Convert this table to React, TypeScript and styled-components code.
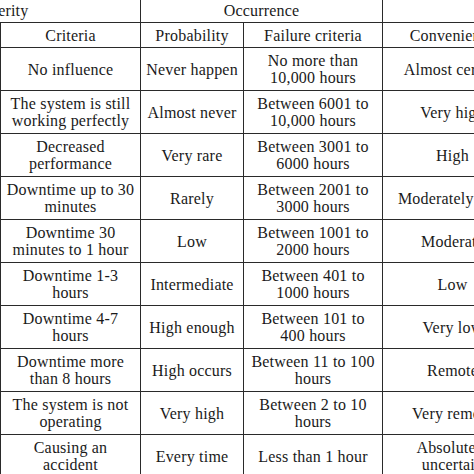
import styled, { createGlobalStyle } from "styled-components";

const GlobalStyle = createGlobalStyle`
  html, body {
    margin: 0;
    padding: 0;
    overflow: hidden;
    background: #fff;
  }
`;

const Viewport = styled.div`
  width: 474px;
  height: 474px;
  overflow: hidden;
  background: #fff;
`;

const Table = styled.table`
  border-collapse: collapse;
  table-layout: fixed;
  width: 800px;
  margin-left: -139px;
  margin-top: -3px;
  font-family: "Liberation Serif", "Times New Roman", serif;
  font-size: 16px;
  letter-spacing: 0.2px;
  line-height: 17px;
  color: #1a1a1a;
`;

const HeadRow = styled.tr`
  height: 25px;
`;

const BodyRow = styled.tr`
  height: 43px;
`;

const Cell = styled.td`
  border: 1px solid #2a2a2a;
  padding: 0 2px;
  text-align: center;
  vertical-align: middle;
  white-space: nowrap;
`;

const HeadCell = styled(Cell).attrs({ as: "th" })`
  font-weight: normal;
`;

type Row = {
  rank: number;
  criteria: string[];
  probability: string[];
  failure: string[];
  convenience: string[];
};

const rows: Row[] = [
  { rank: 1, criteria: ["No influence"], probability: ["Never happen"], failure: ["No more than", "10,000 hours"], convenience: ["Almost certain"] },
  { rank: 2, criteria: ["The system is still", "working perfectly"], probability: ["Almost never"], failure: ["Between 6001 to", "10,000 hours"], convenience: ["Very high"] },
  { rank: 3, criteria: ["Decreased", "performance"], probability: ["Very rare"], failure: ["Between 3001 to", "6000 hours"], convenience: ["High"] },
  { rank: 4, criteria: ["Downtime up to 30", "minutes"], probability: ["Rarely"], failure: ["Between 2001 to", "3000 hours"], convenience: ["Moderately high"] },
  { rank: 5, criteria: ["Downtime 30", "minutes to 1 hour"], probability: ["Low"], failure: ["Between 1001 to", "2000 hours"], convenience: ["Moderate"] },
  { rank: 6, criteria: ["Downtime 1-3", "hours"], probability: ["Intermediate"], failure: ["Between 401 to", "1000 hours"], convenience: ["Low"] },
  { rank: 7, criteria: ["Downtime 4-7", "hours"], probability: ["High enough"], failure: ["Between 101 to", "400 hours"], convenience: ["Very low"] },
  { rank: 8, criteria: ["Downtime more", "than 8 hours"], probability: ["High occurs"], failure: ["Between 11 to 100", "hours"], convenience: ["Remote"] },
  { rank: 9, criteria: ["The system is not", "operating"], probability: ["Very high"], failure: ["Between 2 to 10", "hours"], convenience: ["Very remote"] },
  { rank: 10, criteria: ["Causing an", "accident"], probability: ["Every time"], failure: ["Less than 1 hour"], convenience: ["Absolutely", "uncertain"] },
];

function Lines({ lines }: { lines: string[] }) {
  return (
    <>
      {lines.map((l, i) => (
        <span key={i}>
          {i > 0 && <br />}
          {l}
        </span>
      ))}
    </>
  );
}

export default function App() {
  return (
    <Viewport>
      <GlobalStyle />
      <Table>
        <colgroup>
          <col style={{ width: 139 }} />
          <col style={{ width: 140 }} />
          <col style={{ width: 103 }} />
          <col style={{ width: 139 }} />
          <col style={{ width: 140 }} />
          <col style={{ width: 139 }} />
        </colgroup>
        <thead>
          <HeadRow>
            <HeadCell colSpan={2}>Severity</HeadCell>
            <HeadCell colSpan={2}>Occurrence</HeadCell>
            <HeadCell colSpan={2}>Detection</HeadCell>
          </HeadRow>
          <HeadRow>
            <HeadCell>Rank</HeadCell>
            <HeadCell>Criteria</HeadCell>
            <HeadCell>Probability</HeadCell>
            <HeadCell>Failure criteria</HeadCell>
            <HeadCell>Convenience</HeadCell>
            <HeadCell>Rank</HeadCell>
          </HeadRow>
        </thead>
        <tbody>
          {rows.map((r) => (
            <BodyRow key={r.rank}>
              <Cell>{r.rank}</Cell>
              <Cell><Lines lines={r.criteria} /></Cell>
              <Cell><Lines lines={r.probability} /></Cell>
              <Cell><Lines lines={r.failure} /></Cell>
              <Cell><Lines lines={r.convenience} /></Cell>
              <Cell>{r.rank}</Cell>
            </BodyRow>
          ))}
        </tbody>
      </Table>
    </Viewport>
  );
}
